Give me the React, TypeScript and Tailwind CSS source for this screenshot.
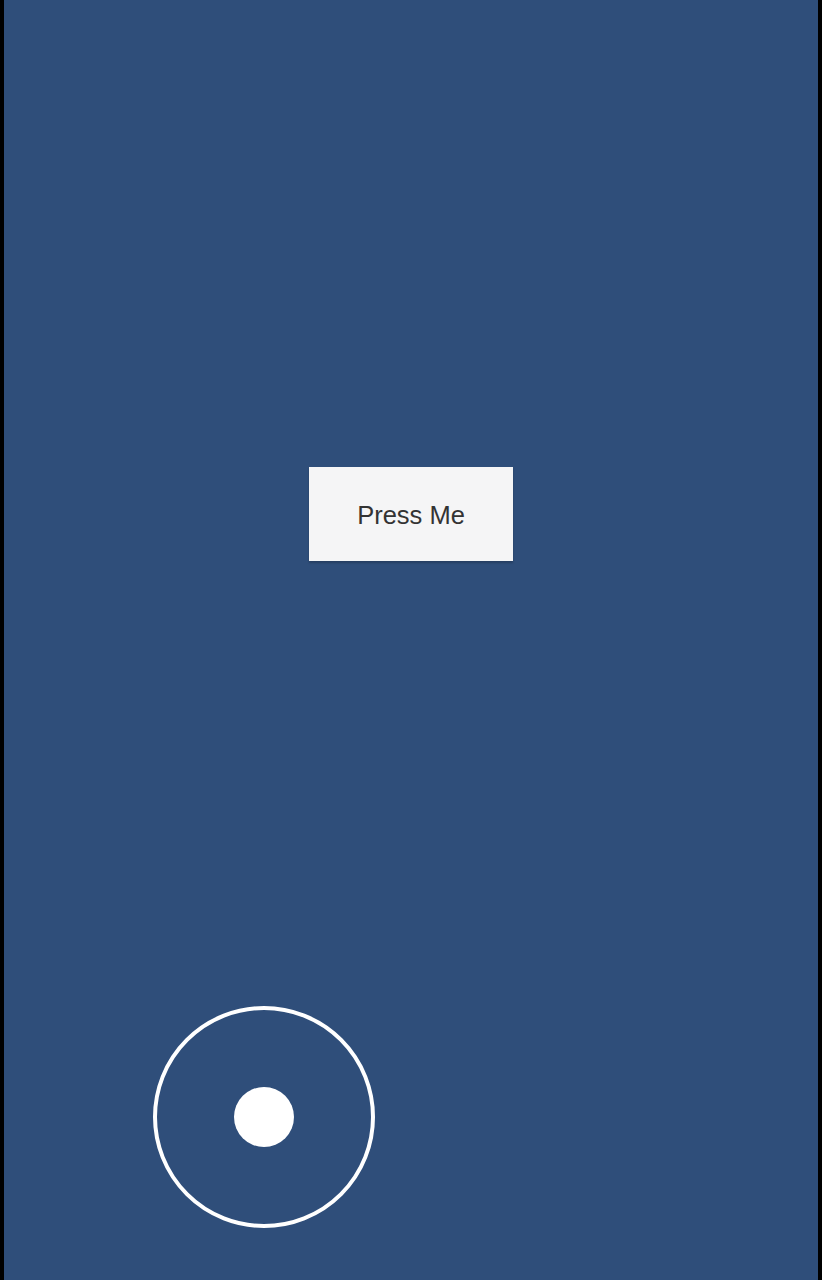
const App = () => {
  return (
    <div className="flex h-[1280px] w-full bg-black px-[4px]">
      <div className="flex flex-1 flex-col bg-[#2f4e7a]">
        <div className="flex justify-center pt-[467px]">
          <button className="h-[94px] w-[204px] bg-[#f5f5f6] pt-[3px] text-[25.5px] text-[#333333] shadow-[0_2px_2px_rgba(0,0,0,0.2)] font-['Liberation_Sans',Arial,sans-serif]">
            Press Me
          </button>
        </div>
        <div className="ml-[149px] mt-[445px] flex h-[222px] w-[222px] items-center justify-center rounded-full border-4 border-white">
          <div className="h-[60px] w-[60px] rounded-full bg-white" />
        </div>
      </div>
    </div>
  );
};

export default App;
